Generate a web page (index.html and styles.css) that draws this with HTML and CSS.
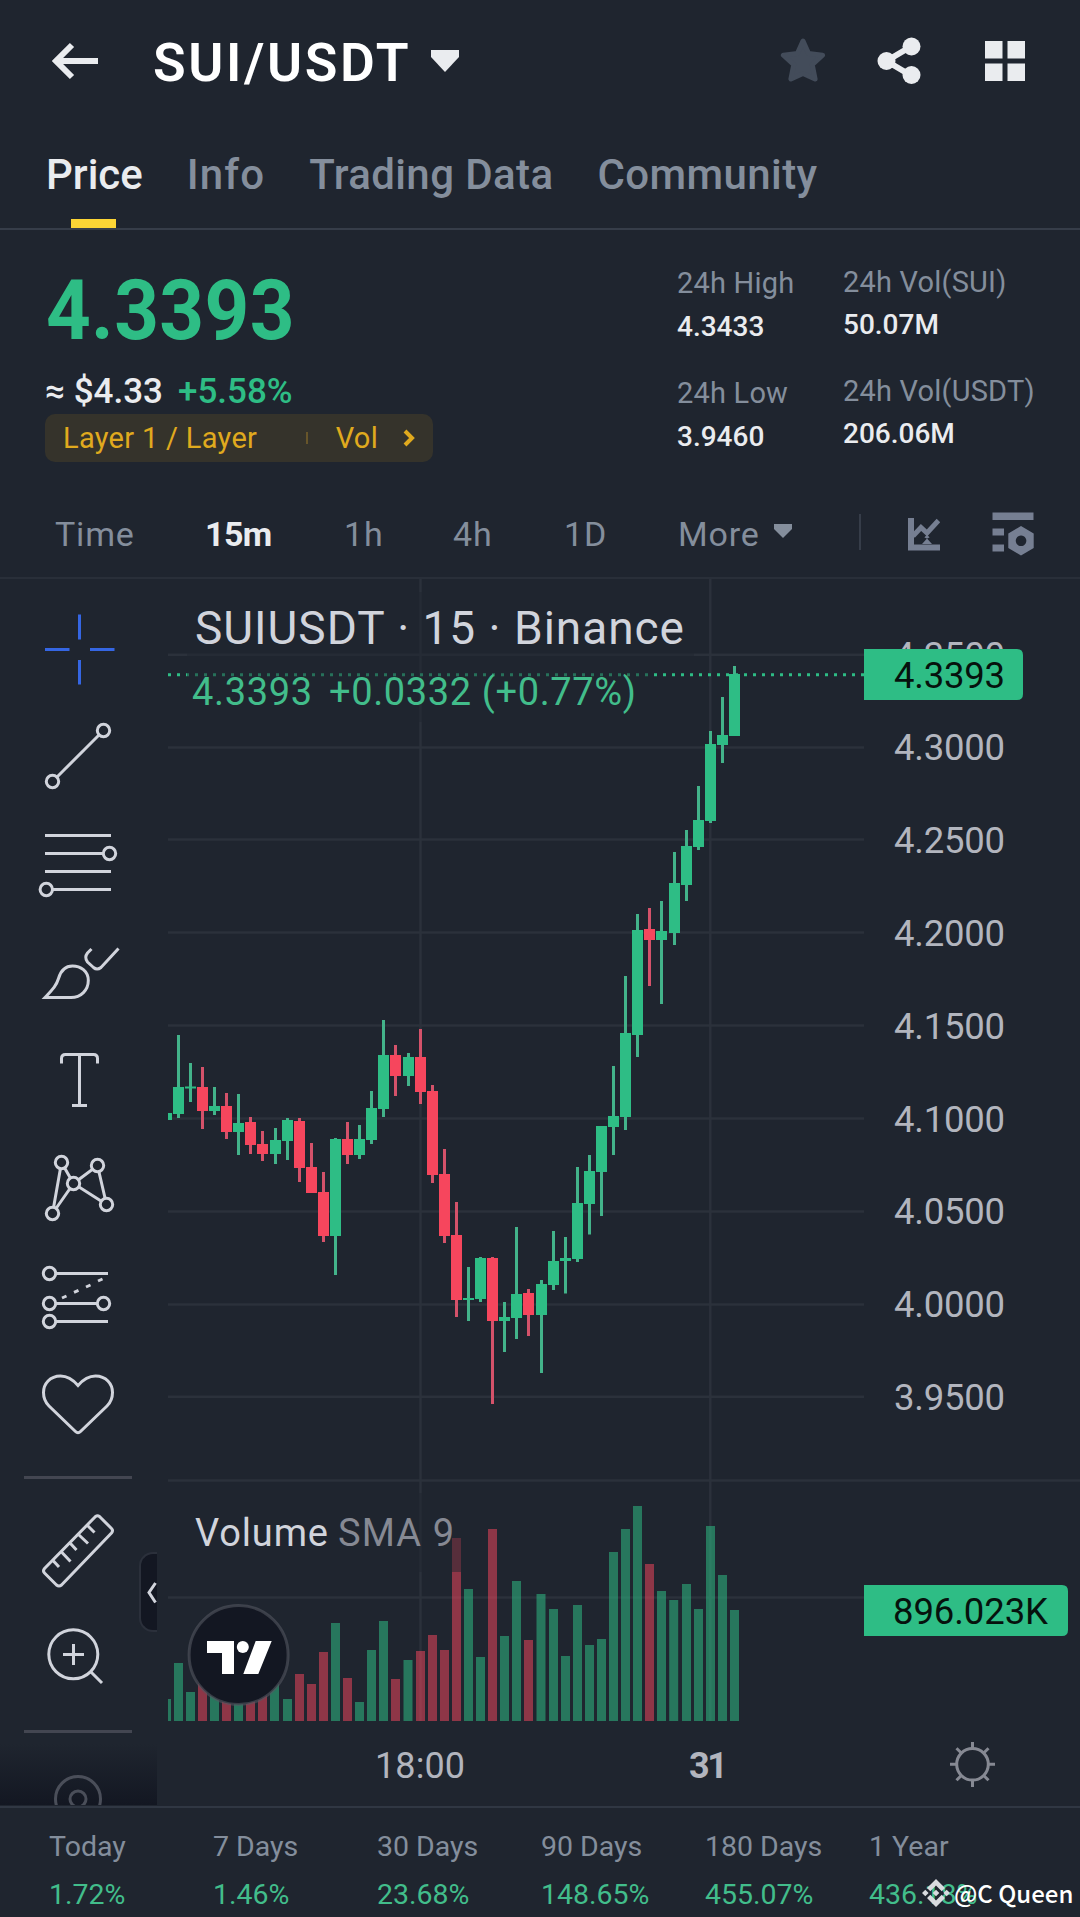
FILE: index.html
```html
<!DOCTYPE html>
<html lang="en">
<head>
<meta charset="utf-8">
<title>SUI/USDT</title>
<link rel="stylesheet" href="styles.css">
</head>
<body>
<div class="app">
  <header class="header">
    <svg class="back" width="46" height="38" viewBox="52 41 46 38"><path d="M98 60H56M72 44L56 60L72 76" fill="none" stroke="#eaecef" stroke-width="6"/></svg>
    <h1 class="pair">SUI/USDT</h1>
    <svg class="caret" width="28" height="22" viewBox="0 0 28 22"><path d="M0 0H28V7L14 22L0 7Z" fill="#eaecef"/></svg>
    <div class="actions">
      <svg width="46" height="48" viewBox="0 0 46 48"><path d="M23 4l5.6 12.6 14 1.6-10.4 9.4 2.9 14.4L23 36.4 10.900 42l2.900-14.400L3.400 18.200l14-1.600z" fill="#434c5a" stroke="#434c5a" stroke-width="5" stroke-linejoin="round"/></svg>
      <svg width="44" height="48" viewBox="0 0 44 48"><path d="M34 9.500L9.500 24L34 38.500" fill="none" stroke="#eaecef" stroke-width="6"/><circle cx="34.500" cy="9.500" r="9" fill="#eaecef"/><circle cx="9.500" cy="24" r="9" fill="#eaecef"/><circle cx="34.500" cy="38" r="9" fill="#eaecef"/></svg>
      <svg width="40" height="40" viewBox="0 0 40 40"><path d="M0 0H17.500V17.500H0ZM22.500 0H40V17.500H22.500ZM0 22.500H17.500V40H0ZM22.500 22.500H40V40H22.500Z" fill="#eaecef"/></svg>
    </div>
  </header>

  <nav class="tabs">
    <span class="tab active">Price</span>
    <span class="tab loose">Info</span>
    <span class="tab">Trading Data</span>
    <span class="tab">Community</span>
  </nav>

  <section class="summary">
    <div class="quote">
      <div class="last">4.3393</div>
      <div class="sub"><span>≈ $4.33</span><span class="up">+5.58%</span></div>
      <div class="chip">
        <span class="chip-name">Layer 1 / Layer</span>
        <i class="chip-sep"></i>
        <span class="chip-vol">Vol</span>
        <svg width="12" height="18" viewBox="0 0 12 18"><path d="M2 2L9 9L2 16" fill="none" stroke="#e0aa1e" stroke-width="4"/></svg>
      </div>
    </div>
    <dl class="stats">
      <dt>24h High</dt><dd>4.3433</dd>
      <dt>24h Low</dt><dd>3.9460</dd>
    </dl>
    <dl class="stats volume">
      <dt>24h Vol(SUI)</dt><dd>50.07M</dd>
      <dt>24h Vol(USDT)</dt><dd>206.06M</dd>
    </dl>
  </section>

  <nav class="intervals">
    <span>Time</span>
    <span class="active">15m</span>
    <span>1h</span>
    <span>4h</span>
    <span>1D</span>
    <span class="more">More <svg width="18" height="14" viewBox="0 0 18 14"><path d="M0 0H18V5L9 14L0 5Z" fill="#848e9c"/></svg></span>
    <i class="rule"></i>
    <svg width="32" height="33" viewBox="909 515 32 33"><path d="M909 515h6v26.500h26v6h-32z" fill="#767f92"/><path d="M914 533L922 524.500L928 530L939.500 517.500" fill="none" stroke="#767f92" stroke-width="5"/><path d="M928 531.500l2.600 3-2.600 1 5 5.500h-10l5-5.500-2.600-1z" fill="#767f92"/></svg>
    <svg class="settings" width="42" height="44" viewBox="993 510.500 42 44"><path d="M993.500 511h41v7.500h-41zM993.500 527h11.500v7h-11.500zM993.500 543h11.500v7h-11.500z" fill="#767f92"/><path fill-rule="evenodd" d="M1022 524.500l12.700 7.500v14.500L1022 554l-12.700-7.500V532zM1022 534a5.300 5.300 0 1 0 .1 0z" fill="#767f92"/></svg>
  </nav>

  <main class="chart">
    <aside class="tools">
      <svg viewBox="0 595 157 108"><path class="blue" d="M79.500 614.500V639.500M79.500 660V684.500M45 649.500H69.500M90 649.500H114.500"/></svg>
      <svg viewBox="0 703 157 108"><path d="M57 777L99 735"/><circle cx="52.500" cy="781.500" r="6.200"/><circle cx="103.500" cy="730.500" r="6.200"/></svg>
      <svg viewBox="0 811 157 108"><path d="M45 835.500H111M45 853.500H103M45 871.500H111M53 889.500H111"/><circle cx="109.500" cy="853.500" r="6.200"/><circle cx="46.300" cy="889.500" r="6.200"/></svg>
      <svg viewBox="0 919 157 108"><path d="M45 997.500H71C81 997.500 88.300 990 88.300 980.500S80.500 966 72.500 966S60.500 971.500 58.500 978.500S52 990 45 997.500ZM91.500 949l-4 4q-3.500 4.500 0 9l6 5.500q3.500 3 7.500 0L118.500 948.500"/></svg>
      <svg viewBox="0 1027 157 108"><path d="M61.500 1063.500v-5q0-4 4-4H93.500q4 0 4 4v5M79.500 1054.500V1105.500M72 1105.500H87"/></svg>
      <svg viewBox="0 1135 157 108"><path d="M52.500 1213.500L61.500 1162.500L73.500 1183.500ZM73.500 1183.500L97.500 1165.500L106.500 1204.500Z"/><circle cx="61.500" cy="1162.500" r="6.200"/><circle cx="97.500" cy="1165.500" r="6.200"/><circle cx="73.500" cy="1183.500" r="6.200"/><circle cx="52.500" cy="1213.500" r="6.200"/><circle cx="106.500" cy="1204.500" r="6.200"/></svg>
      <svg viewBox="0 1243 157 108"><path d="M56 1273.500H108M56 1303.500H97M56 1321.500H108M62 1298l4.500-2M74 1292.300l4.500-2M86 1287l4.500-2M98 1281l4.500-2"/><circle cx="49.500" cy="1273.500" r="6.200"/><circle cx="49.500" cy="1303.500" r="6.200"/><circle cx="103.500" cy="1303.500" r="6.200"/><circle cx="49.500" cy="1321.500" r="6.200"/></svg>
      <svg viewBox="0 1351 157 108"><path d="M78 1385.500C72 1378.500 66 1376 60.500 1376C50 1376 43.500 1384 43.500 1392.500C43.500 1399 46 1403 49 1406L75.500 1431.500Q78 1434 80.500 1431.500L107 1406C110 1403 112.500 1399 112.500 1392.500C112.500 1384 106 1376 95.500 1376C90 1376 84 1378.500 78 1385.500Z"/></svg>
      <i class="divider"></i>
      <svg viewBox="0 1497 157 108"><path stroke-linejoin="round" d="M95.500 1516.500q2-1.500 4 0l12 12q2 2 0 4.500L61.500 1585q-2.500 2-5 0L44.500 1573q-2-2 0-4.500ZM53 1560.500l6 6.500M61.500 1552l9 9.500M70.500 1543.500l6 6.500M79 1535l9 8.500M88 1526l6.500 6.500"/></svg>
      <svg viewBox="0 1605 157 108"><circle cx="73.300" cy="1654.300" r="24.500"/><path d="M63 1654.500H84M73.500 1644V1665M91 1672L102 1683"/></svg>
      <i class="divider"></i>
      <div class="fade"><svg viewBox="0 1734 157 72"><circle class="dim" cx="78" cy="1800" r="22.500"/><circle class="dim" cx="78" cy="1800" r="8"/></svg></div>
      <div class="collapse"><svg viewBox="140 1553 17 78"><path d="M155.500 1582L149 1591.500L155.500 1601.500"/></svg></div>
    </aside>

    <svg class="plot" width="923" height="1227" viewBox="157 579 923 1227">
      <!-- grid -->
      <path stroke="#2b313b" stroke-width="2.500" d="M168 654.700H864M168 747.500H864M168 839.500H864M168 932.500H864M168 1025.500H864M168 1118.500H864M168 1211.500H864M168 1304.500H864M168 1396.700H864M168 1480.500H1080M168 1597.500H864M420.500 579V1721M710.300 579V1721"/>
      <!-- last price line -->
      <path stroke="#2ebd85" stroke-width="3" stroke-dasharray="3 6" d="M168 674.700H864"/>

      <!-- volume bars -->
      <g fill="none" stroke-width="9">
        <path stroke="#2ebd85" stroke-opacity=".54" d="M178.500 1721V1663M190.500 1721V1692M214.500 1721V1690M238.500 1721V1693M274.500 1721V1676M287.500 1721V1699M335.500 1721V1623M359.500 1721V1702M371.500 1721V1650M383.500 1721V1621M408 1721V1660M468.500 1721V1589M480.500 1721V1657M504.500 1721V1636M516.500 1721V1581M541 1721V1594M553.500 1721V1609M565.500 1721V1656M577.500 1721V1605M589.500 1721V1645M601.500 1721V1639M613.500 1721V1552M625.500 1721V1529M637.500 1721V1506M661.500 1721V1591M673.700 1721V1600M686.500 1721V1584M698.500 1721V1609M710.500 1721V1526M722.500 1721V1575M734.500 1721V1610"/>
        <path stroke="#2ebd85" stroke-opacity=".54" stroke-width="3" d="M169.500 1721V1699"/>
        <path stroke="#f6465d" stroke-opacity=".52" d="M202.500 1721V1677M226.500 1721V1693M250.500 1721V1693M262.500 1721V1690M299.500 1721V1674M311.500 1721V1684M323.500 1721V1652M347.500 1721V1678M395.500 1721V1679M420.500 1721V1651M432.500 1721V1635M444.500 1721V1650M456.500 1721V1538M492.500 1721V1529M528.500 1721V1640M649.500 1721V1564"/>
      </g>

      <!-- wicks -->
      <g fill="none" stroke-width="3">
        <path stroke="#43b38a" d="M178.500 1035V1118M190.500 1063V1102M214.500 1087V1115M238.500 1094V1155M275.500 1128V1164M287.500 1118V1160M335.500 1138V1275M359.500 1125V1159M371.500 1091V1144M383.500 1020V1117M408.500 1053V1086M468.500 1267V1321M480.500 1257V1302M504.500 1302V1352M516.500 1227V1339M541.500 1280V1373M553.500 1231V1290M565.500 1237V1293.500M577.500 1167V1262M589.500 1155V1234.500M601.500 1126V1216M613.500 1066V1155M625.500 976V1130M637.500 914V1057M661.500 901V1004M674.500 852V945M686.500 830V901M698.500 786V850M710.500 731V823M722.500 697V763M734.500 666V736"/>
        <path stroke="#d4526a" d="M202.500 1067V1129M226.500 1093V1139M250.500 1117V1154M262.500 1131V1161M299.500 1118V1182M311.500 1143V1193M323.500 1172V1242M347.500 1122V1164M395.500 1045V1096M420.500 1029V1104M432.500 1085V1183M444.500 1149V1243M456.500 1202V1317M492.500 1257V1404M528.500 1289V1336M649.500 908V986"/>
      </g>
      <!-- candle bodies -->
      <g fill="none" stroke-width="11">
        <path stroke="#2ebd85" stroke-width="4" d="M170 1113V1120"/>
        <path stroke="#2ebd85" d="M178.500 1087V1114M190.500 1086.500V1088.500M214.500 1106V1111M238.500 1123V1132M275.500 1140V1154M287.500 1120V1141M335.500 1139V1236M359.500 1139V1155M371.500 1108V1140M383.500 1055V1109M408.500 1057V1076M468.500 1298V1300M480.500 1258V1299M504.500 1317V1321M516.500 1294V1318M541.500 1284V1315M553.500 1261V1285M565.500 1258V1261M577.500 1203V1259M589.500 1171V1204M601.500 1126V1172M613.500 1116V1127M625.500 1033V1117M637.500 930V1035M661.500 931V940M674.500 883V933M686.500 846V885M698.500 820V847M710.500 744V821M722.500 735V745M734.500 674V736"/>
        <path stroke="#f6465d" d="M202.500 1087V1111M226.500 1106V1132M250.500 1122V1145M262.500 1144V1154M299.500 1121V1168M311.500 1167V1193M323.500 1192V1236M347.500 1139V1155M395.500 1055V1076M420.500 1057V1092M432.500 1091V1175M444.500 1174V1236M456.500 1235V1300M492.500 1258V1321M528.500 1293V1315M649.500 929V940"/>
      </g>

      <!-- legends -->
      <g fill="#1f252f" fill-opacity=".5">
        <rect x="187" y="592" width="507" height="70"/>
        <rect x="187" y="662" width="464" height="60"/>
        <rect x="187" y="1493" width="275" height="79"/>
      </g>
      <text x="195" y="643.500" font-size="46" fill="#d1d4dc" textLength="489">SUIUSDT · 15 · Binance</text>
      <g font-size="38" fill="#42bd8b">
        <text x="192" y="705" textLength="120">4.3393</text>
        <text x="329" y="705" textLength="307">+0.0332 (+0.77%)</text>
      </g>
      <text x="195" y="1545.500" font-size="38" fill="#d1d4dc" textLength="133">Volume</text>
      <text x="338" y="1545.500" font-size="38" fill="#868993" textLength="116">SMA 9</text>

      <!-- price axis -->
      <g font-size="36.500" fill="#b2b5be">
        <text x="894" y="667.500" textLength="111">4.3500</text>
        <text x="894" y="760.300" textLength="111">4.3000</text>
        <text x="894" y="853" textLength="111">4.2500</text>
        <text x="894" y="946" textLength="111">4.2000</text>
        <text x="894" y="1039" textLength="111">4.1500</text>
        <text x="894" y="1131.500" textLength="111">4.1000</text>
        <text x="894" y="1224" textLength="111">4.0500</text>
        <text x="894" y="1317" textLength="111">4.0000</text>
        <text x="894" y="1410" textLength="111">3.9500</text>
        <text x="375" y="1778" font-size="36" textLength="90">18:00</text>
        <text x="689" y="1778" font-size="36" font-weight="700" textLength="39">31</text>
      </g>
      <path fill="#2ebd85" d="M864 649H1017q6 0 6 6V694q0 6-6 6H864ZM864 1585H1062q6 0 6 6V1630q0 6-6 6H864Z"/>
      <g font-size="36.500" fill="#06120d">
        <text x="894" y="688" textLength="111">4.3393</text>
        <text x="893" y="1623.700" textLength="155">896.023K</text>
      </g>

      <!-- chart provider badge -->
      <circle cx="238.600" cy="1655" r="49.500" fill="#131722" stroke="#535761" stroke-opacity=".6" stroke-width="3"/>
      <path fill="#fff" d="M207 1641H234V1674H222V1653H207ZM255.700 1641H271.700L258.300 1674H243.300Z"/>
      <circle cx="242.800" cy="1647" r="6" fill="#fff"/>

      <!-- axis settings -->
      <g fill="none" stroke="#868993" stroke-width="3">
        <circle cx="972.500" cy="1764.300" r="15.800"/>
        <path d="M972.500 1742V1748.500M972.500 1780V1787M950 1764.300H956.500M988.500 1764.300H995M956.500 1748.300L961.300 1753M983.700 1775.500L988.500 1780.300M956.500 1780.300L961.300 1775.500M983.700 1753L988.500 1748.300"/>
      </g>
    </svg>
  </main>

  <footer class="returns">
    <div><span>Today</span><b>1.72%</b></div>
    <div><span>7 Days</span><b>1.46%</b></div>
    <div><span>30 Days</span><b>23.68%</b></div>
    <div><span>90 Days</span><b>148.65%</b></div>
    <div><span>180 Days</span><b>455.07%</b></div>
    <div><span>1 Year</span><b>436.18%</b></div>
    <div class="watermark">
      <svg width="28" height="28" viewBox="0 0 28 28"><path fill="#d9dbdf" d="M14 0l9 9-3.300 3.300L14 6.600 8.300 12.300 5 9ZM14 28l9-9-3.300-3.300L14 21.400 8.300 15.700 5 19ZM14 10.700L17.300 14 14 17.300 10.700 14ZM3.300 10.700L6.600 14 3.300 17.300 0 14ZM24.700 10.700L28 14 24.700 17.300 21.400 14Z"/></svg>
      <span>@C Queen</span>
    </div>
  </footer>
</div>
</body>
</html>
```

FILE: styles.css
```css
* { box-sizing: border-box; }

body {
  margin: 0;
  background: #1f252f;
  color: #eaecef;
  font-family: Roboto, "Liberation Sans", sans-serif;
}

svg { display: block; flex: none; }

.app {
  width: 1080px;
  height: 1917px;
  display: flex;
  flex-direction: column;
  overflow: hidden;
}
.app > * { flex: none; }

/* header */
.header {
  height: 122px;
  display: flex;
  align-items: center;
  padding: 0 55px 0 52px;
}
.pair {
  margin: 2px 0 0 55px;
  font-size: 53.5px;
  font-weight: 600;
  letter-spacing: 2.6px;
  color: #fff;
}
.caret { margin-left: 20px; }
.actions {
  margin-left: auto;
  display: flex;
  align-items: center;
}
.actions svg + svg { margin-left: 51px; }
.actions svg:last-child { margin-left: 64px; }

/* tabs */
.tabs {
  height: 108px;
  display: flex;
  gap: 44px;
  padding-left: 46px;
  border-bottom: 2px solid #363d49;
}
.tab {
  position: relative;
  line-height: 106px;
  font-size: 42px;
  font-weight: 500;
  letter-spacing: .4px;
  color: #848e9c;
}
.tab.loose { letter-spacing: 1.1px; }
.tab.active { color: #eaecef; letter-spacing: 0; }
.tab.active::after {
  content: "";
  position: absolute;
  left: 25px;
  bottom: 0;
  width: 45px;
  height: 9px;
  background: #fcd535;
}

/* price summary */
.summary {
  height: 261px;
  display: grid;
  grid-template-columns: 632px 166px 1fr;
  padding: 31px 0 0 45px;
}
.quote { padding-top: 8px; }
.last {
  padding-left: 1px;
  line-height: 84px;
  font-size: 84px;
  font-weight: 700;
  letter-spacing: .4px;
  color: #2ebd85;
  transform: scaleX(.93);
  transform-origin: 0 50%;
}
.sub {
  display: flex;
  gap: 15px;
  margin-top: 17px;
  line-height: 44px;
  font-size: 35px;
  font-weight: 500;
}
.up { color: #2ebd85; }
.chip {
  width: 388px;
  height: 48px;
  display: flex;
  align-items: center;
  padding: 0 18px;
  border-radius: 10px;
  background: #35332b;
  color: #e0aa1e;
  font-size: 29px;
  letter-spacing: .3px;
}
.chip-sep {
  width: 2px;
  height: 12px;
  margin: 0 28px 0 auto;
  background: #67552a;
}
.chip-vol { margin-right: 25px; }
.stats { margin: 0; }
.stats dt {
  line-height: 44px;
  font-size: 29px;
  letter-spacing: .2px;
  color: #848e9c;
}
.stats dd {
  margin: 0 0 22px;
  line-height: 44px;
  font-size: 28px;
  font-weight: 500;
}
.stats.volume { margin-top: -1px; }
.stats.volume dd { line-height: 42px; margin-bottom: 23px; }

/* intervals */
.intervals {
  height: 88px;
  display: grid;
  grid-template-columns: 150px 139px 109px 111px 114px 181px 49px 84px auto;
  align-items: center;
  justify-content: start;
  padding: 0 0 0 55px;
  border-bottom: 2px solid #292f39;
  font-size: 34px;
  letter-spacing: .8px;
  color: #848e9c;
}
.intervals .active { color: #eaecef; font-weight: 700; letter-spacing: -.6px; }
.more { display: flex; align-items: center; gap: 14px; }
.more svg { margin-top: -6px; }
.rule { width: 2px; height: 36px; margin-top: -4px; background: #363d49; }

/* chart */
.chart {
  height: 1227px;
  display: grid;
  grid-template-columns: 157px 923px;
}
.tools {
  position: relative;
  display: flex;
  flex-direction: column;
  padding-top: 16px;
}
.tools svg {
  width: 157px;
  height: 108px;
  fill: none;
  stroke: #d1d4dc;
  stroke-width: 3;
}
.tools .blue { stroke: #3566e3; }
.tools circle { fill: #1f252f; }
.divider {
  flex: none;
  width: 108px;
  height: 3px;
  margin: 17px 0 18px 24px;
  background: #434651;
}
.divider + .fade { margin-top: -18px; }
.fade { background: linear-gradient(#1f252f 15%, #131722); }
.tools .fade svg { height: 72px; }
.tools .dim { fill: none; stroke: #4a4e59; }
.collapse {
  position: absolute;
  right: 0;
  top: 973px;
  width: 18px;
  height: 80px;
  border: 2px solid #2b303b;
  border-right: 0;
  border-radius: 14px 0 0 14px;
  background: #131722;
  overflow: hidden;
}
.tools .collapse svg { width: 17px; height: 78px; margin-left: -1px; }

/* returns */
.returns {
  position: relative;
  height: 111px;
  display: grid;
  grid-template-columns: repeat(6, 164px);
  padding: 17px 0 0 49px;
  border-top: 2px solid #303743;
}
.returns span, .returns b {
  display: block;
  font-weight: 400;
  font-size: 28.5px;
}
.returns span { line-height: 44px; color: #848e9c; }
.returns b { line-height: 52px; color: #42bd8b; }
.returns .watermark {
  position: absolute;
  left: 922px;
  top: 67px;
  display: flex;
  align-items: center;
  gap: 4px;
}
.returns .watermark span {
  line-height: 36px;
  font-family: "Noto Sans CJK SC", "Noto Sans", sans-serif;
  font-size: 24px;
  font-weight: 500;
  color: #fff;
}
```
